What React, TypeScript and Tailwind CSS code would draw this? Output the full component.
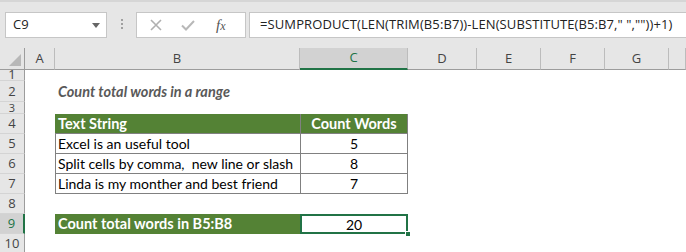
import React from "react";

const COLS = "grid grid-cols-[25px_30px_245px_108px_69px_64px_64px_64px_1fr]";
const ui = { fontFamily: '"Open Sans", "Noto Sans", sans-serif' };
const cell = { fontFamily: 'Lato, "Noto Sans", sans-serif' };

function RowHead({ n, sel }: { n: number; sel?: boolean }) {
  return (
    <div
      className={
        "flex items-center justify-center text-[13px] border-b border-[#d4d4d4] " +
        (sel
          ? "bg-[#d2d2d2] text-[#217346] border-r-2 border-r-[#217346]"
          : "bg-[#e6e6e6] text-[#444] border-r border-r-[#9c9c9c]")
      }
      style={ui}
    >
      <span className="leading-none">{n}</span>
    </div>
  );
}

function Empty({ n }: { n: number }) {
  return (
    <>
      {Array.from({ length: n }).map((_, i) => (
        <div key={i} />
      ))}
    </>
  );
}

export default function App() {
  const colHeads = ["A", "B", "C", "D", "E", "F", "G", ""];
  return (
    <div className="w-[686px] h-[252px] overflow-hidden bg-white relative" style={ui}>
      {/* toolbar */}
      <div className="h-[48px] bg-[#e6e6e6] border-t-[2px] border-[#d6d6d6] flex items-start pt-[10px]">
        <div className="ml-[5px] w-[102px] h-[26px] bg-white border border-[#c6c6c6] flex items-center pl-[7px] pr-[6px]">
          <span className="text-[13px] text-[#222] flex-1">C9</span>
          <svg width="8" height="5" viewBox="0 0 8 5">
            <path d="M0 0 L8 0 L4 5 Z" fill="#666" />
          </svg>
        </div>
        <div className="ml-[14px] mt-[7px] flex flex-col gap-[2px]">
          <div className="w-[2px] h-[2px] bg-[#a0a0a0]" />
          <div className="w-[2px] h-[2px] bg-[#a0a0a0]" />
          <div className="w-[2px] h-[2px] bg-[#a0a0a0]" />
        </div>
        <div className="ml-[13px] w-[110px] h-[26px] bg-white border border-[#c6c6c6] flex items-center">
          <svg className="ml-[13px]" width="12" height="12" viewBox="0 0 12 12">
            <path d="M1 1 L11 11 M11 1 L1 11" stroke="#b0b0b0" strokeWidth="1.6" />
          </svg>
          <svg className="ml-[19px]" width="14" height="11" viewBox="0 0 14 11">
            <path d="M1 5.5 L5 9.5 L13 1" stroke="#b8b8b8" strokeWidth="2" fill="none" />
          </svg>
          <span
            className="ml-[21px] text-[15px] italic text-[#555] leading-none"
            style={{ fontFamily: '"Liberation Serif", serif' }}
          >
            f<span className="text-[12px]">x</span>
          </span>
        </div>
        <div className="ml-[3px] flex-1 h-[26px] bg-white border border-r-0 border-[#c6c6c6] flex items-center pl-[10px]">
          <span className="text-[13px] text-[#222] whitespace-nowrap tracking-[0.1px]">
            =SUMPRODUCT(LEN(TRIM(B5:B7))-LEN(SUBSTITUTE(B5:B7," ",""))+1)
          </span>
        </div>
      </div>

      {/* column headers */}
      <div className={COLS + " h-[20px]"}>
        <div className="bg-[#e6e6e6] border-r border-b border-[#9c9c9c] relative">
          <svg className="absolute right-[3px] bottom-[3px]" width="12" height="12" viewBox="0 0 12 12">
            <path d="M12 0 L12 12 L0 12 Z" fill="#b8b8b8" />
          </svg>
        </div>
        {colHeads.map((c, i) => (
          <div
            key={i}
            className={
              "flex items-center justify-center text-[13px] border-r border-r-[#bcbcbc] " +
              (c === "C"
                ? "bg-[#d2d2d2] text-[#217346] border-b-2 border-b-[#217346]"
                : "bg-[#e6e6e6] text-[#444] border-b border-b-[#9c9c9c]")
            }
          >
            {c}
          </div>
        ))}
      </div>

      {/* body */}
      <div className={COLS + " grid-rows-[13px_21px_12px_20px_20px_20px_20px_20px_20px_20px]"} style={cell}>
        {/* row 1 */}
        <RowHead n={1} />
        <Empty n={8} />
        {/* row 2 */}
        <RowHead n={2} />
        <div />
        <div className="flex items-center pl-[3px] text-[14.5px] font-bold italic text-[#595959] whitespace-nowrap">
          Count total words in a range
        </div>
        <Empty n={6} />
        {/* row 3 */}
        <div
          className="bg-[#e6e6e6] border-r border-[#9c9c9c] border-b border-b-[#d4d4d4] flex items-center justify-center text-[11px] text-[#444] leading-[10px]"
          style={ui}
        >
          3
        </div>
        <Empty n={8} />
        {/* row 4 */}
        <RowHead n={4} />
        <div />
        <div className="bg-[#548235] text-white font-bold text-[14.5px] flex items-center pl-[3px] border-b border-[#808080]">
          Text String
        </div>
        <div className="bg-[#548235] text-white font-bold text-[14.5px] flex items-center justify-center border-l border-r border-b border-[#808080]">
          Count Words
        </div>
        <Empty n={5} />
        {/* rows 5-7 */}
        {[
          ["Excel is an useful tool", "5"],
          ["Split cells by comma,  new line or slash", "8"],
          ["Linda is my monther and best friend", "7"],
        ].map(([t, v], i) => (
          <React.Fragment key={i}>
            <RowHead n={5 + i} />
            <div />
            <div className="border-l border-b border-[#808080] flex items-center pl-[2px] text-[14px] text-black whitespace-pre">
              {t}
            </div>
            <div className="border-l border-r border-b border-[#808080] flex items-center justify-center text-[14px] text-black">
              {v}
            </div>
            <Empty n={5} />
          </React.Fragment>
        ))}
        {/* row 8 */}
        <RowHead n={8} />
        <Empty n={8} />
        {/* row 9 */}
        <RowHead n={9} sel />
        <div />
        <div className="bg-[#548235] text-white font-bold text-[14.5px] flex items-center pl-[3px]">
          Count total words in B5:B8
        </div>
        <div className="relative border-2 border-[#217346] flex items-center justify-center text-[14px] text-black">
          20
          <div className="absolute right-[-5px] bottom-[-5px] w-[6px] h-[6px] bg-[#217346] border border-white" />
        </div>
        <Empty n={5} />
        {/* row 10 */}
        <RowHead n={10} />
        <Empty n={8} />
      </div>
    </div>
  );
}
